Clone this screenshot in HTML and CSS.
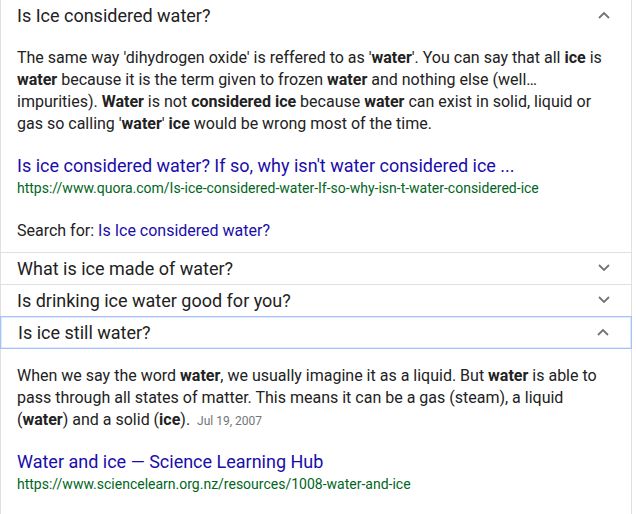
FILE: index.html
```html
<!DOCTYPE html>
<html>
<head>
<meta charset="utf-8">
<link rel="stylesheet" href="styles.css">
</head>
<body>
<div class="faq">
  <div class="item open">
    <div class="q"><span>Is Ice considered water?</span><svg class="chev" viewBox="0 0 12 8"><path d="M1 7 L6 2 L11 7" /></svg></div>
    <div class="a">
      <p class="ans">The same way 'dihydrogen oxide' is reffered to as '<b>water</b>'. You can say that all <b>ice</b> is <b>water</b> because it is the term given to frozen <b>water</b> and nothing else (well… impurities). <b>Water</b> is not <b>considered ice</b> because <b>water</b> can exist in solid, liquid or gas so calling '<b>water</b>' <b>ice</b> would be wrong most of the time.</p>
      <div class="src">
        <a class="title" href="#">Is ice considered water? If so, why isn't water considered ice ...</a>
        <div class="url">https://www.quora.com/Is-ice-considered-water-If-so-why-isn-t-water-considered-ice</div>
      </div>
      <div class="search">Search for: <a href="#">Is Ice considered water?</a></div>
    </div>
  </div>
  <div class="item">
    <div class="q"><span>What is ice made of water?</span><svg class="chev" viewBox="0 0 12 8"><path d="M1 1 L6 6 L11 1" /></svg></div>
  </div>
  <div class="item">
    <div class="q"><span>Is drinking ice water good for you?</span><svg class="chev" viewBox="0 0 12 8"><path d="M1 1 L6 6 L11 1" /></svg></div>
  </div>
  <div class="item open">
    <div class="q focus"><span>Is ice still water?</span><svg class="chev" viewBox="0 0 12 8"><path d="M1 7 L6 2 L11 7" /></svg></div>
    <div class="a">
      <p class="ans">When we say the word <b>water</b>, we usually imagine it as a liquid. But <b>water</b> is able to pass through all states of matter. This means it can be a gas (steam), a liquid (<b>water</b>) and a solid (<b>ice</b>). <span class="date">Jul 19, 2007</span></p>
      <div class="src">
        <a class="title" href="#">Water and ice — Science Learning Hub</a>
        <div class="url">https://www.sciencelearn.org.nz/resources/1008-water-and-ice</div>
      </div>
    </div>
  </div>
</div>
</body>
</html>
```

FILE: styles.css
```css
html, body {
  margin: 0;
  padding: 0;
  background: #fff;
}
body {
  font-family: Roboto, "Liberation Sans", Arial, sans-serif;
  color: #222;
  overflow: hidden;
}
.faq {
  width: 630px;
  margin-top: -1px;
  border-left: 1px solid #e0e0e0;
  border-right: 1px solid #e0e0e0;
}
.item {
  border-top: 1px solid #e0e0e0;
}
.q {
  height: 30px;
  display: flex;
  align-items: center;
  justify-content: space-between;
  padding: 0 21px 1px 16px;
  font-size: 18px;
  color: #222;
}
.q.focus {
  margin: -1px -1px 0 -1px;
  height: 30px;
  padding: 0 22px 1px 17px;
  border: 1px solid #a1c2fa;
  box-shadow: inset 0 0 0 0.5px #c6dafc;
}
.chev {
  width: 12px;
  height: 8px;
  fill: none;
  stroke: #70757a;
  stroke-width: 1.8;
}
.a {
  padding: 16px 16px 0 16px;
}
.ans {
  margin: 0;
  font-size: 16px;
  line-height: 22px;
}
.ans b {
  font-weight: bold;
}
.date {
  font-size: 12px;
  line-height: 1;
  color: #70757a;
  margin-left: 3px;
}
.src {
  margin-top: 19px;
  padding-bottom: 22px;
}
.title {
  display: block;
  font-size: 18px;
  line-height: 24px;
  color: #1a0dab;
  text-decoration: none;
}
.url {
  font-size: 14px;
  line-height: 20px;
  color: #006621;
}
.search {
  font-size: 16px;
  line-height: 22px;
  padding-bottom: 10px;
}
.search a {
  color: #1a0dab;
  text-decoration: none;
}
```
